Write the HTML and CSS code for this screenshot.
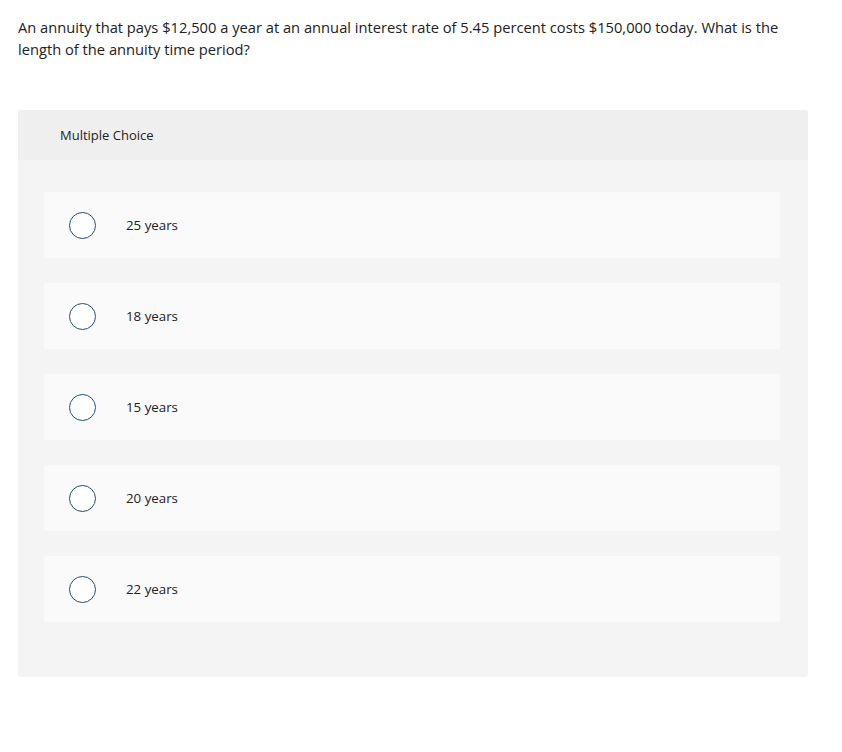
FILE: index.html
```
<!DOCTYPE html>
<html>
<head>
<meta charset="utf-8">
<link rel="stylesheet" href="styles.css">
</head>
<body>
<div class="page">
  <p class="question">An annuity that pays $12,500 a year at an annual interest rate of 5.45 percent costs $150,000 today. What is the length of the annuity time period?</p>
  <div class="panel">
    <div class="panel-head">Multiple Choice</div>
    <div class="panel-body">
      <div class="option"><span class="radio"></span><span class="label">25 years</span></div>
      <div class="option"><span class="radio"></span><span class="label">18 years</span></div>
      <div class="option"><span class="radio"></span><span class="label">15 years</span></div>
      <div class="option"><span class="radio"></span><span class="label">20 years</span></div>
      <div class="option"><span class="radio"></span><span class="label">22 years</span></div>
    </div>
  </div>
</div>
</body>
</html>
```
FILE: styles.css
```
html, body {
  margin: 0;
  padding: 0;
  background: #ffffff;
}
body {
  font-family: "Open Sans", "Liberation Sans", sans-serif;
  color: #222222;
}
.page {
  padding: 16px 34px 0 18px;
}
.question {
  margin: 0;
  font-size: 14.7px;
  line-height: 22px;
  width: 790px;
}
.panel {
  margin-top: 50px;
  width: 790px;
  border-radius: 3px;
  background: #f4f4f4;
  overflow: hidden;
}
.panel-head {
  height: 50px;
  background: #efefef;
  display: flex;
  align-items: center;
  padding-left: 42px;
  font-size: 13px;
  color: #222222;
}
.panel-body {
  padding: 32px 28px 55px 26px;
  display: flex;
  flex-direction: column;
  gap: 25px;
}
.option {
  height: 66px;
  background: #fafafa;
  border-radius: 3px;
  display: flex;
  align-items: center;
  padding-left: 25px;
}
.radio {
  width: 25px;
  height: 25px;
  border: 1.5px solid #1f4f7d;
  border-radius: 50%;
  background: #ffffff;
  flex: none;
}
.label {
  margin-left: 30px;
  font-size: 13.3px;
  color: #222222;
}
```
